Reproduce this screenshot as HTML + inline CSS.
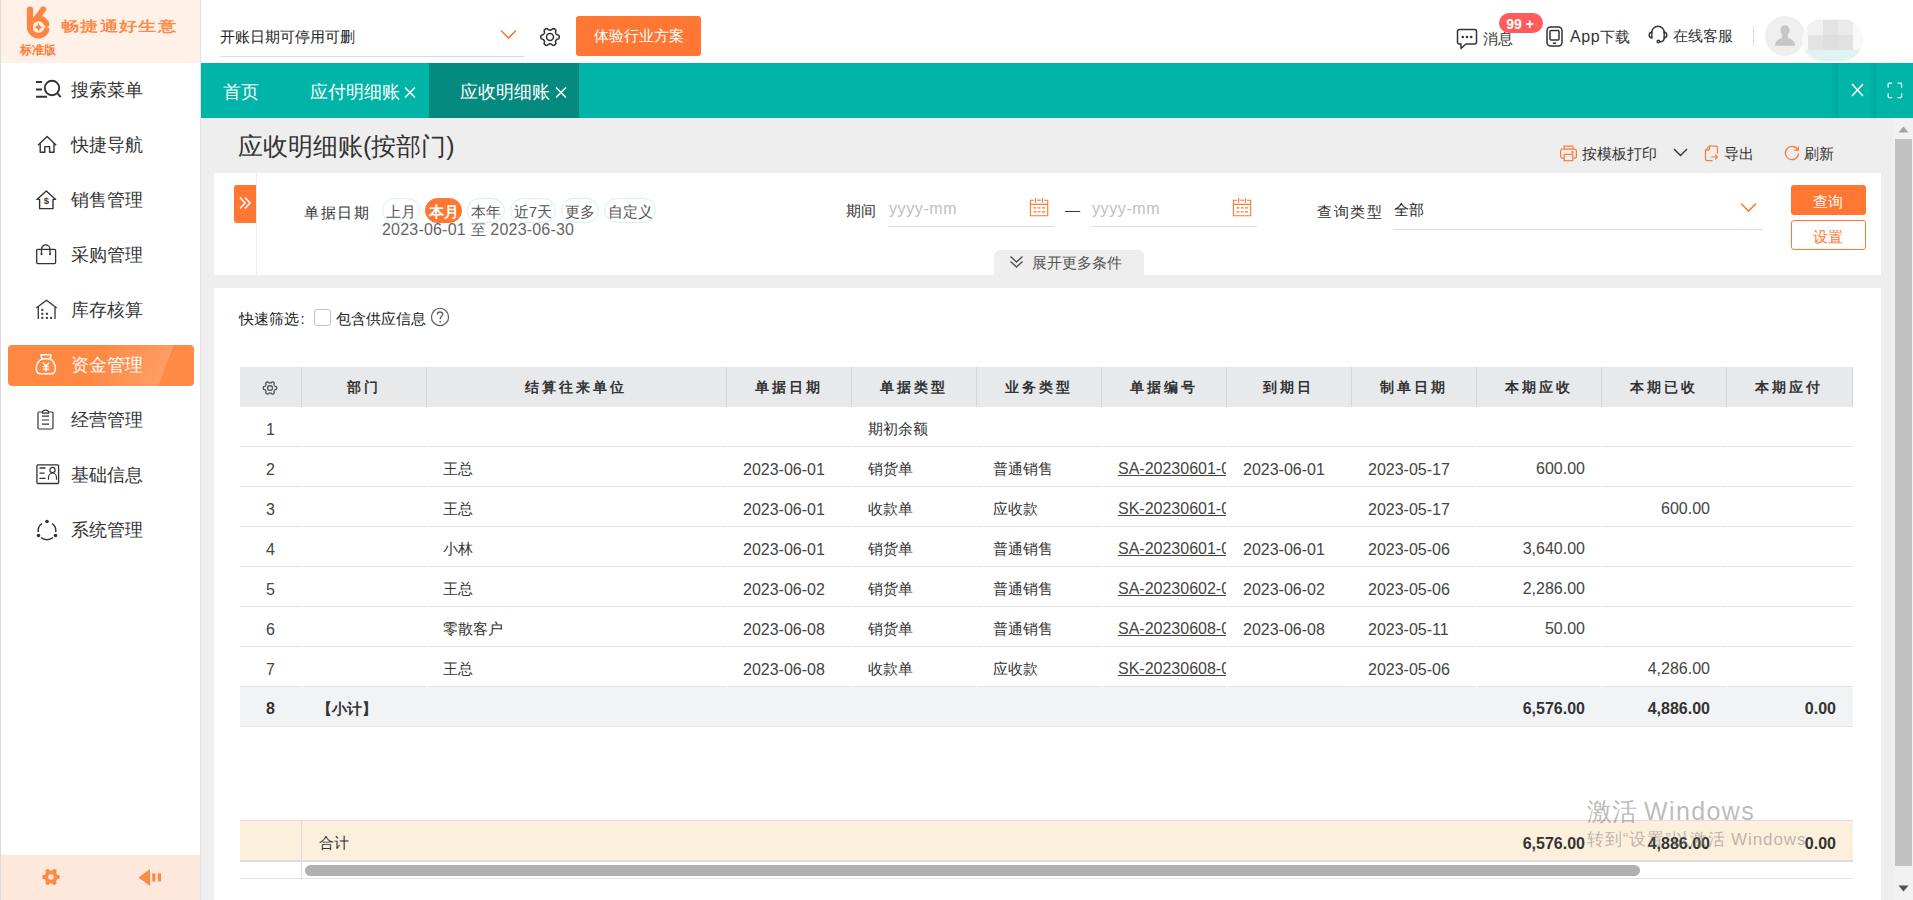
<!DOCTYPE html>
<html><head><meta charset="utf-8">
<style>
*{box-sizing:border-box;margin:0;padding:0}
html,body{width:1913px;height:900px;overflow:hidden;background:#fff;font-family:"Liberation Sans",sans-serif;color:#333}
.a{position:absolute;white-space:nowrap}
svg{position:absolute;overflow:visible}
/* sidebar */
#side{position:absolute;left:0;top:0;width:201px;height:900px;background:#fff;border-left:1px solid #dcdcdc;border-right:1px solid #e2e2e2}
#logo{position:absolute;left:0;top:0;width:199px;height:63px;background:#fff0e8}
.mi{position:absolute;left:71px;font-size:18px;line-height:18px;color:#333}
#act{position:absolute;left:7px;top:345px;width:186px;height:41px;border-radius:4px;background:linear-gradient(111deg,#ff8843 0%,#ff8843 45%,#ff9d63 82%,#ff8a46 82.4%,#ff8a46 100%)}
#sbot{position:absolute;left:0;top:855px;width:199px;height:45px;background:#fee8dc}
/* header */
#hdr{position:absolute;left:201px;top:0;width:1712px;height:63px;background:#fff}
#tabs{position:absolute;left:201px;top:63px;width:1712px;height:55px;background:#00b4a8}
.tab{position:absolute;top:20px;font-size:18px;line-height:18px;color:#fff}
#content{position:absolute;left:201px;top:118px;width:1712px;height:782px;background:#eeeeee}
.card{position:absolute;background:#fff}
.pill{position:absolute;top:198px;height:25px;border:1px solid #d8efed;border-radius:13px;font-size:15px;line-height:25px;color:#555;text-align:center}
/* table */
.th{position:absolute;top:367px;height:40px;font-size:14px;font-weight:bold;line-height:40px;color:#333;text-align:center;letter-spacing:3px}
.vl{position:absolute;width:1px;background:#d4d6d9}
.hl{position:absolute;left:240px;width:1613px;height:1px;background:#e3e3e3}
.c{position:absolute;font-size:15px;line-height:16px;color:#333;white-space:nowrap}
.r{text-align:right}
.lk{text-decoration:underline}
</style></head><body>

<!-- SIDEBAR -->
<div id="side">
  <div id="logo"></div>
  <div id="act"></div>
  <div id="sbot"></div>
</div>
<svg style="left:0px;top:0px" width="50" height="45" viewBox="0 0 50 45" fill="none" stroke="#ff8540" stroke-linecap="round">
  <path d="M30 9.5V27" stroke-width="6.2"/>
  <path d="M43.3 9.3L36.5 18.5" stroke-width="6"/>
  <path d="M46.6 24.2A8.6 8.6 0 1 0 46.6 29.8" stroke-width="5.6"/>
  <path d="M38.6 22.6Q39.1 26.8 43.2 27.3Q39.1 27.8 38.6 32Q38.1 27.8 34 27.3Q38.1 26.8 38.6 22.6Z" fill="#ff8540" stroke="none"/>
</svg>
<div class="a" style="left:61px;top:19px;font-size:14px;line-height:14px;font-weight:bold;color:#ff8a48;letter-spacing:0.9px;transform:scaleX(1.3);transform-origin:0 0">畅捷通好生意</div>
<div class="a" style="left:20px;top:44px;font-size:12px;line-height:12px;font-weight:bold;color:#ff7d3a">标准版</div>

<div class="mi" style="top:81px">搜索菜单</div>
<div class="mi" style="top:136px">快捷导航</div>
<div class="mi" style="top:191px">销售管理</div>
<div class="mi" style="top:246px">采购管理</div>
<div class="mi" style="top:301px">库存核算</div>
<div class="mi" style="top:356px;color:#fff">资金管理</div>
<div class="mi" style="top:411px">经营管理</div>
<div class="mi" style="top:466px">基础信息</div>
<div class="mi" style="top:521px">系统管理</div>

<!-- menu icons -->
<svg style="left:36px;top:79px" width="26" height="21" viewBox="0 0 26 21" fill="none" stroke="#333" stroke-width="1.9">
  <path d="M0 3H6M0 10.5H6M0 17.8H11"/><circle cx="16" cy="9" r="7.2"/><path d="M21.2 14.2L24.8 18.2"/>
</svg>
<svg style="left:37px;top:135px" width="21" height="19" viewBox="0 0 21 19" fill="none" stroke="#333" stroke-width="1.4" stroke-linejoin="round">
  <path d="M1 10.2L10.1 1.6L19.2 10.2"/><path d="M3.2 8.2V17.2H7.8V11.6H12.6V17.2H17V8.2"/>
</svg>
<svg style="left:36px;top:189px" width="22" height="21" viewBox="0 0 22 21" fill="none" stroke="#333" stroke-width="1.4" stroke-linejoin="round">
  <path d="M3.6 10.4H0.9L10.3 1.9L19.7 10.4H17V19.6H3.6Z"/>
  <text x="10.3" y="15.3" font-size="9.5" font-weight="bold" text-anchor="middle" fill="#333" stroke="none" font-family="Liberation Sans">$</text>
</svg>
<svg style="left:36px;top:244px" width="21" height="21" viewBox="0 0 21 21" fill="none" stroke="#333" stroke-width="1.3">
  <rect x="0.7" y="5.4" width="18.9" height="14.2" rx="1"/><path d="M5.5 10.2V5.2A4.25 4.25 0 0 1 14 5.2V10.2"/><circle cx="5.5" cy="10.2" r="1" fill="#333" stroke="none"/><circle cx="14" cy="10.2" r="1" fill="#333" stroke="none"/>
</svg>
<svg style="left:36px;top:299px" width="22" height="22" viewBox="0 0 22 22" fill="none" stroke="#333" stroke-width="1.3">
  <path d="M0.3 9L10.5 1.2L20.7 9M2.3 7.6V20M19 7.6V20"/>
  <g fill="#333" stroke="none"><rect x="5.3" y="9.9" width="2" height="2"/><rect x="5.3" y="13.8" width="2" height="2"/><rect x="9.9" y="13.8" width="2" height="2"/><rect x="5.3" y="17.9" width="2" height="2"/><rect x="9.9" y="17.9" width="2" height="2"/><rect x="14.1" y="17.9" width="2" height="2"/></g>
</svg>
<svg style="left:35px;top:353px" width="22" height="22" viewBox="0 0 22 22" fill="none" stroke="#fff" stroke-width="1.5" stroke-linejoin="round">
  <path d="M6.6 1.8H15.2Q16.4 1.8 16 2.9L14.9 5.8H7.1L6 2.9Q5.6 1.8 6.6 1.8Z"/>
  <path d="M7.1 5.8C3.6 7.6 1.3 11 1.3 15.5C1.3 19 2.6 20.8 5.6 20.8H15.9C18.9 20.8 20.3 19 20.3 15.5C20.3 11 18.2 7.6 14.9 5.8"/>
  <path d="M8 9.6L11 13.2L14 9.6M11 13.2V18.6M7.9 13.6H14.1M7.9 16.2H14.1" stroke-width="1.4"/>
</svg>
<svg style="left:37px;top:409px" width="18" height="22" viewBox="0 0 18 22" fill="none" stroke="#333" stroke-width="1.2" stroke-linejoin="round">
  <path d="M6 3H2.2Q1 3 1 4.2V18.8Q1 20 2.2 20H14.8Q16 20 16 18.8V4.2Q16 3 14.8 3H11"/><path d="M5.5 4.2H11.5V3.2C11.5 1.9 10.3 1.2 8.5 1.2C6.7 1.2 5.5 1.9 5.5 3.2Z"/><path d="M5 7.2H12M5 11H12M5 15.2H12"/>
</svg>
<svg style="left:36px;top:464px" width="24" height="21" viewBox="0 0 24 21" fill="none" stroke="#333" stroke-width="1.3">
  <rect x="0.9" y="0.9" width="21.7" height="18.6" rx="1"/><path d="M3.5 4H9.5M3.5 9.2H8.5M3.5 14.4H9.5"/>
  <circle cx="16.5" cy="6" r="2.6" stroke-width="1.2"/><path d="M12.5 15.8V13.5C12.5 11 14.2 9 16.5 9C18.8 9 20.5 11 20.5 13.5V15.8" stroke-width="1.2"/>
</svg>
<svg style="left:36px;top:519px" width="22" height="22" viewBox="0 0 22 22" fill="none" stroke="#333" stroke-width="1.5">
  <path d="M6 4.5A9 9 0 0 0 2.2 13M19.8 13A9 9 0 0 0 16 4.5M5 18.5A9 9 0 0 0 17 18.5" />
  <circle cx="11" cy="2.5" r="1.8" fill="#333" stroke="none"/><circle cx="2.5" cy="16.5" r="1.8" fill="#333" stroke="none"/><circle cx="19.5" cy="16.5" r="1.8" fill="#333" stroke="none"/>
</svg>
<!-- sidebar bottom icons -->
<svg style="left:40.5px;top:868.3px" width="20" height="18" viewBox="0 0 20 18"><path fill-rule="evenodd" d="M18.80 9.00L18.77 9.46L18.68 9.91L18.52 10.35L18.26 10.76L17.34 10.97L16.43 11.09L16.14 11.36L15.91 11.63L15.72 11.91L15.54 12.20L15.38 12.50L15.24 12.81L15.11 13.14L15.02 13.52L15.37 14.37L15.65 15.27L15.43 15.70L15.13 16.06L14.78 16.37L14.40 16.62L13.99 16.82L13.55 16.97L13.09 17.05L12.61 17.03L11.97 16.34L11.40 15.61L11.03 15.50L10.68 15.44L10.34 15.41L10.00 15.40L9.66 15.41L9.32 15.44L8.97 15.50L8.60 15.61L8.03 16.34L7.39 17.03L6.91 17.05L6.45 16.97L6.01 16.82L5.60 16.62L5.22 16.37L4.87 16.06L4.57 15.70L4.35 15.27L4.63 14.37L4.98 13.52L4.89 13.14L4.76 12.81L4.62 12.50L4.46 12.20L4.28 11.91L4.09 11.63L3.86 11.36L3.57 11.09L2.66 10.97L1.74 10.76L1.48 10.35L1.32 9.91L1.23 9.46L1.20 9.00L1.23 8.54L1.32 8.09L1.48 7.65L1.74 7.24L2.66 7.03L3.57 6.91L3.86 6.64L4.09 6.37L4.28 6.09L4.46 5.80L4.62 5.50L4.76 5.19L4.89 4.86L4.98 4.48L4.63 3.63L4.35 2.73L4.57 2.30L4.87 1.94L5.22 1.63L5.60 1.38L6.01 1.18L6.45 1.03L6.91 0.95L7.39 0.97L8.03 1.66L8.60 2.39L8.97 2.50L9.32 2.56L9.66 2.59L10.00 2.60L10.34 2.59L10.68 2.56L11.03 2.50L11.40 2.39L11.97 1.66L12.61 0.97L13.09 0.95L13.55 1.03L13.99 1.18L14.40 1.38L14.78 1.63L15.13 1.94L15.43 2.30L15.65 2.73L15.37 3.63L15.02 4.48L15.11 4.86L15.24 5.19L15.38 5.50L15.54 5.80L15.72 6.09L15.91 6.37L16.14 6.64L16.43 6.91L17.34 7.03L18.26 7.24L18.52 7.65L18.68 8.09L18.77 8.54Z M12.8 9A2.8 2.8 0 1 0 7.2 9A2.8 2.8 0 1 0 12.8 9Z" fill="#ff8a45"/></svg>
<svg style="left:138px;top:869px" width="24" height="17" viewBox="0 0 24 17" fill="#ff8a45">
  <path d="M12 0V17L0.5 8.5Z"/><rect x="14.2" y="4.3" width="3.2" height="8.2"/><rect x="19.8" y="4.3" width="3.2" height="8.2"/>
</svg>

<!-- HEADER -->
<div id="hdr"></div>
<div class="a" style="left:220px;top:29px;font-size:15px;line-height:15px;color:#222">开账日期可停用可删</div>
<div style="position:absolute;left:220px;top:56px;width:304px;height:1px;background:#dcdcdc"></div>
<svg style="left:500px;top:29px" width="17" height="11" viewBox="0 0 17 11" fill="none" stroke="#ff7a33" stroke-width="1.6"><path d="M1 1.5L8.5 9L16 1.5"/></svg>
<svg style="left:538.5px;top:25.5px" width="22" height="22" viewBox="0 0 24 24" fill="none" stroke="#333" stroke-width="1.7" stroke-linejoin="round"><path d="M22.1 12.0L22.1 12.5L21.9 13.0L21.7 13.5L21.4 14.0L20.5 14.3L19.6 14.5L19.2 14.8L18.9 15.1L18.7 15.4L18.5 15.8L18.3 16.1L18.2 16.5L18.0 16.9L17.9 17.3L18.2 18.2L18.4 19.1L18.2 19.7L17.9 20.1L17.5 20.4L17.1 20.7L16.6 21.0L16.1 21.1L15.5 21.2L15.0 21.1L14.3 20.5L13.7 19.8L13.2 19.7L12.8 19.6L12.4 19.5L12.0 19.5L11.6 19.5L11.2 19.6L10.8 19.7L10.3 19.8L9.7 20.5L9.0 21.1L8.5 21.2L7.9 21.1L7.4 21.0L7.0 20.7L6.5 20.4L6.1 20.1L5.8 19.7L5.6 19.1L5.8 18.2L6.1 17.3L6.0 16.9L5.8 16.5L5.7 16.1L5.5 15.8L5.3 15.4L5.1 15.1L4.8 14.8L4.4 14.5L3.5 14.3L2.6 14.0L2.3 13.5L2.1 13.0L1.9 12.5L1.9 12.0L1.9 11.5L2.1 11.0L2.3 10.5L2.6 10.0L3.5 9.7L4.4 9.5L4.8 9.2L5.1 8.9L5.3 8.6L5.5 8.3L5.7 7.9L5.8 7.5L6.0 7.1L6.1 6.7L5.8 5.8L5.6 4.9L5.8 4.3L6.1 3.9L6.5 3.6L6.9 3.3L7.4 3.0L7.9 2.9L8.5 2.8L9.0 2.9L9.7 3.5L10.3 4.2L10.8 4.3L11.2 4.4L11.6 4.5L12.0 4.5L12.4 4.5L12.8 4.4L13.2 4.3L13.7 4.2L14.3 3.5L15.0 2.9L15.5 2.8L16.1 2.9L16.6 3.0L17.1 3.3L17.5 3.6L17.9 3.9L18.2 4.3L18.4 4.9L18.2 5.8L17.9 6.7L18.0 7.1L18.2 7.5L18.3 7.9L18.5 8.3L18.7 8.6L18.9 8.9L19.2 9.2L19.6 9.5L20.5 9.7L21.4 10.0L21.7 10.5L21.9 11.0L22.1 11.5Z"/><circle cx="12" cy="12" r="3.8"/></svg>
<div style="position:absolute;left:576px;top:16px;width:125px;height:40px;background:#ff7733;border-radius:3px"></div>
<div class="a" style="left:576px;top:28px;width:125px;text-align:center;font-size:15px;line-height:15px;color:#fff">体验行业方案</div>

<svg style="left:1456px;top:28px" width="22" height="22" viewBox="0 0 22 22" fill="none" stroke="#333" stroke-width="1.5" stroke-linejoin="round">
  <path d="M3.5 1.5H18.5Q20.5 1.5 20.5 3.5V14Q20.5 16 18.5 16H10L5 20.5V16H3.5Q1.5 16 1.5 14V3.5Q1.5 1.5 3.5 1.5Z"/>
  <circle cx="6.8" cy="9" r="1.3" fill="#333" stroke="none"/><circle cx="11" cy="9" r="1.3" fill="#333" stroke="none"/><circle cx="15.2" cy="9" r="1.3" fill="#333" stroke="none"/>
</svg>
<div class="a" style="left:1483px;top:31px;font-size:15px;line-height:15px;color:#333">消息</div>
<div style="position:absolute;left:1499px;top:13px;width:44px;height:20px;background:#ff5b5b;border-radius:10px"></div>
<div class="a" style="left:1498px;top:17px;width:44px;text-align:center;font-size:14px;line-height:14px;font-weight:bold;color:#fff">99 +</div>
<svg style="left:1546px;top:26px" width="17" height="21" viewBox="0 0 17 21" fill="none" stroke="#333" stroke-width="1.5">
  <rect x="1" y="1" width="15" height="19" rx="3.5"/><rect x="4" y="4.5" width="9" height="9.5" rx="1"/><path d="M6.8 17.2H10.2"/>
</svg>
<div class="a" style="left:1570px;top:29px;font-size:16px;line-height:16px;color:#333"><span style="letter-spacing:0.6px">App</span><span style="font-size:15px">下载</span></div>
<svg style="left:1648px;top:24px" width="20" height="21" viewBox="0 0 20 21" fill="none" stroke="#333" stroke-width="1.4" stroke-linecap="round">
  <path d="M3.8 8.5A6.2 6.2 0 0 1 16.2 8.5"/><path d="M3.8 8V14"/><path d="M16.2 8V14"/>
  <path d="M3.8 8.2C2 8.2 1.2 9.5 1.2 11C1.2 12.5 2 13.8 3.8 13.8"/><path d="M16.2 8.2C18 8.2 18.8 9.5 18.8 11C18.8 12.5 18 13.8 16.2 13.8"/>
  <path d="M16.2 14C16.2 16.5 14 17.8 11.5 17.8"/><circle cx="10.4" cy="17.6" r="1.3"/>
</svg>
<div class="a" style="left:1673px;top:28px;font-size:15px;line-height:15px;color:#333">在线客服</div>
<div style="position:absolute;left:1753px;top:26px;width:1px;height:20px;background:#d9d9d9"></div>
<div style="position:absolute;left:1765px;top:16px;width:40px;height:40px;border-radius:50%;background:#efefef"></div>
<svg style="left:1775px;top:24px" width="20" height="22" viewBox="0 0 20 22" fill="#c6c6c6">
  <ellipse cx="10" cy="6.2" rx="4.6" ry="5.2"/><path d="M0 21.8C0 17.5 3 15.2 7 13.8H13C17 15.2 20 17.5 20 21.8Z"/><path d="M7.2 10.5H12.8V14.5H7.2Z"/>
</svg>
<div style="position:absolute;left:1802px;top:19px;width:61px;height:42px;border-radius:21px;background:#f7f8f8;overflow:hidden">
  <div style="position:absolute;left:0;top:31px;width:61px;height:11px;background:#dff3f1"></div>
  <div style="position:absolute;left:6px;top:1px;width:15px;height:15px;background:#f1f1f1"></div>
  <div style="position:absolute;left:21px;top:1px;width:15px;height:15px;background:#e3e3e3"></div>
  <div style="position:absolute;left:36px;top:1px;width:15px;height:15px;background:#eaeaea"></div>
  <div style="position:absolute;left:6px;top:16px;width:15px;height:15px;background:#e3e3e3"></div>
  <div style="position:absolute;left:21px;top:16px;width:15px;height:15px;background:#dedede"></div>
  <div style="position:absolute;left:36px;top:16px;width:15px;height:15px;background:#e1e1e1"></div>
</div>
<div style="position:absolute;left:1860px;top:56px;width:53px;height:7px;background:linear-gradient(rgba(0,0,0,0),rgba(0,0,0,0.05));-webkit-mask-image:linear-gradient(90deg,transparent,#000)"></div>
<div id="tabs">
  <div style="position:absolute;left:228px;top:0;width:150px;height:55px;background:#058a80"></div>
  <div style="position:absolute;left:1630px;top:0;width:7px;height:55px;background:linear-gradient(90deg,rgba(0,0,0,0),rgba(0,0,0,0.07))"></div>
  <div style="position:absolute;left:1668px;top:0;width:7px;height:55px;background:linear-gradient(90deg,rgba(0,0,0,0),rgba(0,0,0,0.07))"></div>
</div>
<div class="tab" style="left:223px;top:83px">首页</div>
<div class="tab" style="left:310px;top:83px">应付明细账</div>
<svg style="left:404px;top:87px" width="12" height="11" viewBox="0 0 12 11" stroke="#fff" stroke-width="1.5"><path d="M1 0.5L11 10.5M11 0.5L1 10.5"/></svg>
<div class="tab" style="left:460px;top:83px">应收明细账</div>
<svg style="left:555px;top:87px" width="12" height="11" viewBox="0 0 12 11" stroke="#fff" stroke-width="1.5"><path d="M1 0.5L11 10.5M11 0.5L1 10.5"/></svg>
<svg style="left:1851px;top:83px" width="13" height="14" viewBox="0 0 13 14" stroke="#fff" stroke-width="1.6"><path d="M1 1L12 13M12 1L1 13"/></svg>
<svg style="left:1887px;top:82px" width="16" height="17" viewBox="0 0 16 17" fill="none" stroke="#fff" stroke-width="1.3" stroke-linecap="round" stroke-linejoin="round"><path d="M1.2 5V2.4Q1.2 1.2 2.4 1.2H4.6M11 1.2H13.4Q14.6 1.2 14.6 2.4V5M14.6 12V14.4Q14.6 15.6 13.4 15.6H11M4.6 15.6H2.4Q1.2 15.6 1.2 14.4V12"/></svg>

<!-- CONTENT -->
<div id="content"></div>
<div class="a" style="left:238px;top:134px;font-size:25px;line-height:25px;color:#333">应收明细账(按部门)</div>
<!-- toolbar -->
<svg style="left:1559px;top:145px" width="19" height="17" viewBox="0 0 19 17" fill="none" stroke="#ff7a33" stroke-width="1.2">
  <path d="M5.2 4V1.1H13.8V4"/><path d="M5.2 13.2H3.6Q1.6 13.2 1.6 11.2V6.2Q1.6 4.2 3.6 4.2H15.4Q17.4 4.2 17.4 6.2V11.2Q17.4 13.2 15.4 13.2H13.8"/>
  <rect x="5.2" y="9.3" width="8.6" height="6.4"/><circle cx="13.5" cy="7.1" r="0.6" fill="#ff7a33"/>
</svg>
<div class="a" style="left:1582px;top:146px;font-size:15px;line-height:15px;color:#333">按模板打印</div>
<svg style="left:1673px;top:148px" width="15" height="9" viewBox="0 0 15 9" fill="none" stroke="#333" stroke-width="1.4"><path d="M1 1L7.5 7.5L14 1"/></svg>
<svg style="left:1704px;top:145px" width="16" height="17" viewBox="0 0 16 17" fill="none" stroke="#ff7a33" stroke-width="1.2" stroke-linejoin="round">
  <path d="M13.5 8.5V3Q13.5 1.1 11.6 1.1H5.5L1.5 5.1V13.7Q1.5 15.6 3.4 15.6H8.5"/><path d="M5.5 1.1V3.7Q5.5 5.1 4.1 5.1H1.5"/>
  <path d="M7.2 12H13.3M11 9.6L13.4 12L11 14.4"/>
</svg>
<div class="a" style="left:1724px;top:146px;font-size:15px;line-height:15px;color:#333">导出</div>
<svg style="left:1784px;top:145px" width="17" height="17" viewBox="0 0 17 17" fill="none" stroke="#ff7a33" stroke-width="1.3" stroke-linecap="round">
  <path d="M13.8 5A6.6 6.6 0 1 0 14.5 8.8"/><path d="M14.3 1.8L14.2 5.4L10.8 5.2" stroke-linejoin="round"/>
</svg>
<div class="a" style="left:1804px;top:146px;font-size:15px;line-height:15px;color:#333">刷新</div>

<div class="card" style="left:214px;top:173px;width:1667px;height:102px"></div>
<div style="position:absolute;left:256px;top:173px;width:1px;height:102px;background:#ececec"></div>
<div style="position:absolute;left:234px;top:185px;width:22px;height:38px;background:#ff7733;border-radius:3px 0 0 3px"></div>
<svg style="left:238px;top:196px" width="14" height="14" viewBox="0 0 14 14" fill="none" stroke="#fff" stroke-width="1.6"><path d="M2 1.5L7 7L2 12.5M7 1.5L12 7L7 12.5"/></svg>
<div class="a" style="left:304px;top:205px;font-size:15px;line-height:15px;color:#333;letter-spacing:1.5px">单据日期</div>
<div class="pill" style="left:382px;width:38px">上月</div>
<div class="pill" style="left:425px;width:37px;background:#ff7733;border-color:#ff7733;color:#fff;font-weight:bold">本月</div>
<div class="pill" style="left:467px;width:38px">本年</div>
<div class="pill" style="left:510px;width:46px">近7天</div>
<div class="pill" style="left:561px;width:38px">更多</div>
<div class="pill" style="left:604px;width:52px">自定义</div>
<div class="a" style="left:382px;top:222px;font-size:16px;line-height:16px;color:#666;letter-spacing:0.2px">2023-06-01 <span style="font-size:15px">至</span> 2023-06-30</div>

<div class="a" style="left:846px;top:203px;font-size:15px;line-height:15px;color:#333">期间</div>
<div class="a" style="left:889px;top:201px;font-size:16px;line-height:16px;letter-spacing:0.6px;color:#c0c0c0">yyyy-mm</div>
<div style="position:absolute;left:888px;top:226px;width:166px;height:1px;background:#dcdcdc"></div>
<div class="a" style="left:1065px;top:202px;font-size:15px;line-height:15px;color:#333">—</div>
<div class="a" style="left:1092px;top:201px;font-size:16px;line-height:16px;letter-spacing:0.6px;color:#c0c0c0">yyyy-mm</div>
<div style="position:absolute;left:1092px;top:226px;width:165px;height:1px;background:#dcdcdc"></div>
<svg style="left:1029px;top:197px" width="20" height="20" viewBox="0 0 20 20" fill="none" stroke="#ff7a33" stroke-width="1.15">
  <path d="M5.2 3.2H1.4V18.7H18.7V3.2H15"/><path d="M8.2 3.2H11.9"/><path d="M1.4 7.3H18.7M6.7 1.1V5.8M13.4 1.1V5.8"/><path d="M4.5 10.9H7.5M8.8 10.9H11.6M13 10.9H16M4.5 14.8H7.5M8.8 14.8H11.6M13 14.8H16" stroke-width="1.3"/>
</svg>
<svg style="left:1232px;top:197px" width="20" height="20" viewBox="0 0 20 20" fill="none" stroke="#ff7a33" stroke-width="1.15">
  <path d="M5.2 3.2H1.4V18.7H18.7V3.2H15"/><path d="M8.2 3.2H11.9"/><path d="M1.4 7.3H18.7M6.7 1.1V5.8M13.4 1.1V5.8"/><path d="M4.5 10.9H7.5M8.8 10.9H11.6M13 10.9H16M4.5 14.8H7.5M8.8 14.8H11.6M13 14.8H16" stroke-width="1.3"/>
</svg>
<div style="position:absolute;left:994px;top:250px;width:150px;height:25px;background:#eeeeee;border-radius:6px 6px 0 0"></div>
<svg style="left:1009px;top:255px" width="15" height="14" viewBox="0 0 15 14" fill="none" stroke="#555" stroke-width="1.5"><path d="M1.5 1.5L7.5 7L13.5 1.5M1.5 6.5L7.5 12L13.5 6.5"/></svg>
<div class="a" style="left:1032px;top:255px;font-size:15px;line-height:15px;color:#555">展开更多条件</div>

<div class="a" style="left:1317px;top:204px;font-size:15px;line-height:15px;color:#333;letter-spacing:1.5px">查询类型</div>
<div class="a" style="left:1394px;top:202px;font-size:15px;line-height:15px;color:#222">全部</div>
<svg style="left:1740px;top:202px" width="17" height="11" viewBox="0 0 17 11" fill="none" stroke="#ff7a33" stroke-width="1.6"><path d="M1 1.5L8.5 9L16 1.5"/></svg>
<div style="position:absolute;left:1394px;top:229px;width:369px;height:1px;background:#dcdcdc"></div>
<div style="position:absolute;left:1791px;top:185px;width:75px;height:30px;background:#ff7733;border-radius:3px"></div>
<div class="a" style="left:1790px;top:194px;width:75px;text-align:center;font-size:15px;line-height:15px;color:#fff">查询</div>
<div style="position:absolute;left:1791px;top:220px;width:75px;height:30px;border:1px solid #ff7733;border-radius:3px;background:#fff"></div>
<div class="a" style="left:1790px;top:229px;width:75px;text-align:center;font-size:15px;line-height:15px;color:#ff7733">设置</div>

<div class="card" style="left:214px;top:288px;width:1667px;height:612px"></div>
<!-- TABLE -->
<div class="a" style="left:239px;top:311px;font-size:15px;line-height:15px;color:#222">快速筛选<span style="margin-left:1.5px">:</span></div>
<div style="position:absolute;left:314px;top:309px;width:17px;height:17px;border:1px solid #c4c4c4;border-radius:3px;background:#fff"></div>
<div class="a" style="left:336px;top:311px;font-size:15px;line-height:15px;color:#222">包含供应信息</div>
<svg style="left:430px;top:307px" width="20" height="20" viewBox="0 0 20 20" fill="none" stroke="#666" stroke-width="1.3"><circle cx="10" cy="10" r="8.6"/><path d="M7.3 7.6C7.3 5.9 8.5 5 10 5C11.6 5 12.7 6 12.7 7.3C12.7 9.2 10.2 9.4 10.2 11.7V12.3" stroke-width="1.4"/><circle cx="10.2" cy="14.8" r="0.9" fill="#666" stroke="none"/></svg>
<div style="position:absolute;left:240px;top:367px;width:1613px;height:40px;background:#e8e9eb"></div>
<div class="vl" style="left:301px;top:367px;height:40px"></div>
<div class="vl" style="left:426px;top:367px;height:40px"></div>
<div class="vl" style="left:726px;top:367px;height:40px"></div>
<div class="vl" style="left:851px;top:367px;height:40px"></div>
<div class="vl" style="left:976px;top:367px;height:40px"></div>
<div class="vl" style="left:1101px;top:367px;height:40px"></div>
<div class="vl" style="left:1226px;top:367px;height:40px"></div>
<div class="vl" style="left:1351px;top:367px;height:40px"></div>
<div class="vl" style="left:1476px;top:367px;height:40px"></div>
<div class="vl" style="left:1601px;top:367px;height:40px"></div>
<div class="vl" style="left:1726px;top:367px;height:40px"></div>
<div class="vl" style="left:1852px;top:367px;height:40px"></div>
<div class="th" style="left:301px;width:125px">部门</div>
<div class="th" style="left:426px;width:300px">结算往来单位</div>
<div class="th" style="left:726px;width:125px">单据日期</div>
<div class="th" style="left:851px;width:125px">单据类型</div>
<div class="th" style="left:976px;width:125px">业务类型</div>
<div class="th" style="left:1101px;width:125px">单据编号</div>
<div class="th" style="left:1226px;width:125px">到期日</div>
<div class="th" style="left:1351px;width:125px">制单日期</div>
<div class="th" style="left:1476px;width:125px">本期应收</div>
<div class="th" style="left:1601px;width:125px">本期已收</div>
<div class="th" style="left:1726px;width:126px">本期应付</div>
<svg style="left:262px;top:380px" width="16" height="16" viewBox="0 0 24 24" fill="none" stroke="#444" stroke-width="1.8" stroke-linejoin="round"><path d="M22.1 12.0L22.1 12.5L21.9 13.0L21.7 13.5L21.4 14.0L20.5 14.3L19.6 14.5L19.2 14.8L18.9 15.1L18.7 15.4L18.5 15.8L18.3 16.1L18.2 16.5L18.0 16.9L17.9 17.3L18.2 18.2L18.4 19.1L18.2 19.7L17.9 20.1L17.5 20.4L17.1 20.7L16.6 21.0L16.1 21.1L15.5 21.2L15.0 21.1L14.3 20.5L13.7 19.8L13.2 19.7L12.8 19.6L12.4 19.5L12.0 19.5L11.6 19.5L11.2 19.6L10.8 19.7L10.3 19.8L9.7 20.5L9.0 21.1L8.5 21.2L7.9 21.1L7.4 21.0L7.0 20.7L6.5 20.4L6.1 20.1L5.8 19.7L5.6 19.1L5.8 18.2L6.1 17.3L6.0 16.9L5.8 16.5L5.7 16.1L5.5 15.8L5.3 15.4L5.1 15.1L4.8 14.8L4.4 14.5L3.5 14.3L2.6 14.0L2.3 13.5L2.1 13.0L1.9 12.5L1.9 12.0L1.9 11.5L2.1 11.0L2.3 10.5L2.6 10.0L3.5 9.7L4.4 9.5L4.8 9.2L5.1 8.9L5.3 8.6L5.5 8.3L5.7 7.9L5.8 7.5L6.0 7.1L6.1 6.7L5.8 5.8L5.6 4.9L5.8 4.3L6.1 3.9L6.5 3.6L6.9 3.3L7.4 3.0L7.9 2.9L8.5 2.8L9.0 2.9L9.7 3.5L10.3 4.2L10.8 4.3L11.2 4.4L11.6 4.5L12.0 4.5L12.4 4.5L12.8 4.4L13.2 4.3L13.7 4.2L14.3 3.5L15.0 2.9L15.5 2.8L16.1 2.9L16.6 3.0L17.1 3.3L17.5 3.6L17.9 3.9L18.2 4.3L18.4 4.9L18.2 5.8L17.9 6.7L18.0 7.1L18.2 7.5L18.3 7.9L18.5 8.3L18.7 8.6L18.9 8.9L19.2 9.2L19.6 9.5L20.5 9.7L21.4 10.0L21.7 10.5L21.9 11.0L22.1 11.5Z"/><circle cx="12" cy="12" r="3.7"/></svg>
<div style="position:absolute;left:240px;top:687px;width:1613px;height:40px;background:#f2f3f5"></div>
<div class="hl" style="top:446px"></div>
<div class="hl" style="top:486px"></div>
<div class="hl" style="top:526px"></div>
<div class="hl" style="top:566px"></div>
<div class="hl" style="top:606px"></div>
<div class="hl" style="top:646px"></div>
<div class="hl" style="top:686px"></div>
<div class="hl" style="top:726px"></div>
<div class="c" style="left:240px;width:61px;text-align:center;top:422px;font-size:16px;color:#444">1</div>
<div class="c" style="left:868px;top:421px;font-size:15px;line-height:15px">期初余额</div>
<div class="c" style="left:240px;width:61px;text-align:center;top:462px;font-size:16px;color:#444">2</div>
<div class="c" style="left:443px;top:461px;font-size:15px;line-height:15px">王总</div>
<div class="c" style="left:743px;top:462px;font-size:16px;color:#444">2023-06-01</div>
<div class="c" style="left:868px;top:461px;font-size:15px;line-height:15px">销货单</div>
<div class="c" style="left:993px;top:461px;font-size:15px;line-height:15px">普通销售</div>
<div class="c lk" style="left:1118px;width:108px;overflow:hidden;top:460px;font-size:16px;color:#444;line-height:17px">SA-20230601-0</div>
<div class="c" style="left:1243px;top:462px;font-size:16px;color:#444">2023-06-01</div>
<div class="c" style="left:1368px;top:462px;font-size:16px;color:#444">2023-05-17</div>
<div class="c r" style="left:1476px;width:109px;top:461px;font-size:16px;color:#444">600.00</div>
<div class="c" style="left:240px;width:61px;text-align:center;top:502px;font-size:16px;color:#444">3</div>
<div class="c" style="left:443px;top:501px;font-size:15px;line-height:15px">王总</div>
<div class="c" style="left:743px;top:502px;font-size:16px;color:#444">2023-06-01</div>
<div class="c" style="left:868px;top:501px;font-size:15px;line-height:15px">收款单</div>
<div class="c" style="left:993px;top:501px;font-size:15px;line-height:15px">应收款</div>
<div class="c lk" style="left:1118px;width:108px;overflow:hidden;top:500px;font-size:16px;color:#444;line-height:17px">SK-20230601-0</div>
<div class="c" style="left:1368px;top:502px;font-size:16px;color:#444">2023-05-17</div>
<div class="c r" style="left:1601px;width:109px;top:501px;font-size:16px;color:#444">600.00</div>
<div class="c" style="left:240px;width:61px;text-align:center;top:542px;font-size:16px;color:#444">4</div>
<div class="c" style="left:443px;top:541px;font-size:15px;line-height:15px">小林</div>
<div class="c" style="left:743px;top:542px;font-size:16px;color:#444">2023-06-01</div>
<div class="c" style="left:868px;top:541px;font-size:15px;line-height:15px">销货单</div>
<div class="c" style="left:993px;top:541px;font-size:15px;line-height:15px">普通销售</div>
<div class="c lk" style="left:1118px;width:108px;overflow:hidden;top:540px;font-size:16px;color:#444;line-height:17px">SA-20230601-0</div>
<div class="c" style="left:1243px;top:542px;font-size:16px;color:#444">2023-06-01</div>
<div class="c" style="left:1368px;top:542px;font-size:16px;color:#444">2023-05-06</div>
<div class="c r" style="left:1476px;width:109px;top:541px;font-size:16px;color:#444">3,640.00</div>
<div class="c" style="left:240px;width:61px;text-align:center;top:582px;font-size:16px;color:#444">5</div>
<div class="c" style="left:443px;top:581px;font-size:15px;line-height:15px">王总</div>
<div class="c" style="left:743px;top:582px;font-size:16px;color:#444">2023-06-02</div>
<div class="c" style="left:868px;top:581px;font-size:15px;line-height:15px">销货单</div>
<div class="c" style="left:993px;top:581px;font-size:15px;line-height:15px">普通销售</div>
<div class="c lk" style="left:1118px;width:108px;overflow:hidden;top:580px;font-size:16px;color:#444;line-height:17px">SA-20230602-0</div>
<div class="c" style="left:1243px;top:582px;font-size:16px;color:#444">2023-06-02</div>
<div class="c" style="left:1368px;top:582px;font-size:16px;color:#444">2023-05-06</div>
<div class="c r" style="left:1476px;width:109px;top:581px;font-size:16px;color:#444">2,286.00</div>
<div class="c" style="left:240px;width:61px;text-align:center;top:622px;font-size:16px;color:#444">6</div>
<div class="c" style="left:443px;top:621px;font-size:15px;line-height:15px">零散客户</div>
<div class="c" style="left:743px;top:622px;font-size:16px;color:#444">2023-06-08</div>
<div class="c" style="left:868px;top:621px;font-size:15px;line-height:15px">销货单</div>
<div class="c" style="left:993px;top:621px;font-size:15px;line-height:15px">普通销售</div>
<div class="c lk" style="left:1118px;width:108px;overflow:hidden;top:620px;font-size:16px;color:#444;line-height:17px">SA-20230608-0</div>
<div class="c" style="left:1243px;top:622px;font-size:16px;color:#444">2023-06-08</div>
<div class="c" style="left:1368px;top:622px;font-size:16px;color:#444">2023-05-11</div>
<div class="c r" style="left:1476px;width:109px;top:621px;font-size:16px;color:#444">50.00</div>
<div class="c" style="left:240px;width:61px;text-align:center;top:662px;font-size:16px;color:#444">7</div>
<div class="c" style="left:443px;top:661px;font-size:15px;line-height:15px">王总</div>
<div class="c" style="left:743px;top:662px;font-size:16px;color:#444">2023-06-08</div>
<div class="c" style="left:868px;top:661px;font-size:15px;line-height:15px">收款单</div>
<div class="c" style="left:993px;top:661px;font-size:15px;line-height:15px">应收款</div>
<div class="c lk" style="left:1118px;width:108px;overflow:hidden;top:660px;font-size:16px;color:#444;line-height:17px">SK-20230608-0</div>
<div class="c" style="left:1368px;top:662px;font-size:16px;color:#444">2023-05-06</div>
<div class="c r" style="left:1601px;width:109px;top:661px;font-size:16px;color:#444">4,286.00</div>
<div class="c" style="left:240px;width:61px;text-align:center;top:701px;font-weight:bold;font-size:16px">8</div>

<div class="c r" style="left:1476px;width:109px;top:701px;font-weight:bold;font-size:16px">6,576.00</div>
<div class="c r" style="left:1601px;width:109px;top:701px;font-weight:bold;font-size:16px">4,886.00</div>
<div class="c r" style="left:1726px;width:110px;top:701px;font-weight:bold;font-size:16px">0.00</div>
<div class="c" style="left:317px;top:701px;font-weight:bold;font-size:15px;line-height:15px">【小计】</div>
<div style="position:absolute;left:301px;top:446px;width:2px;height:1px;background:#f3f3f3"></div>
<div style="position:absolute;left:426px;top:446px;width:2px;height:1px;background:#f3f3f3"></div>
<div style="position:absolute;left:726px;top:446px;width:2px;height:1px;background:#f3f3f3"></div>
<div style="position:absolute;left:851px;top:446px;width:2px;height:1px;background:#f3f3f3"></div>
<div style="position:absolute;left:976px;top:446px;width:2px;height:1px;background:#f3f3f3"></div>
<div style="position:absolute;left:1101px;top:446px;width:2px;height:1px;background:#f3f3f3"></div>
<div style="position:absolute;left:1226px;top:446px;width:2px;height:1px;background:#f3f3f3"></div>
<div style="position:absolute;left:1351px;top:446px;width:2px;height:1px;background:#f3f3f3"></div>
<div style="position:absolute;left:1476px;top:446px;width:2px;height:1px;background:#f3f3f3"></div>
<div style="position:absolute;left:1601px;top:446px;width:2px;height:1px;background:#f3f3f3"></div>
<div style="position:absolute;left:1726px;top:446px;width:2px;height:1px;background:#f3f3f3"></div>
<div style="position:absolute;left:1852px;top:446px;width:2px;height:1px;background:#f3f3f3"></div>
<div style="position:absolute;left:301px;top:486px;width:2px;height:1px;background:#f3f3f3"></div>
<div style="position:absolute;left:426px;top:486px;width:2px;height:1px;background:#f3f3f3"></div>
<div style="position:absolute;left:726px;top:486px;width:2px;height:1px;background:#f3f3f3"></div>
<div style="position:absolute;left:851px;top:486px;width:2px;height:1px;background:#f3f3f3"></div>
<div style="position:absolute;left:976px;top:486px;width:2px;height:1px;background:#f3f3f3"></div>
<div style="position:absolute;left:1101px;top:486px;width:2px;height:1px;background:#f3f3f3"></div>
<div style="position:absolute;left:1226px;top:486px;width:2px;height:1px;background:#f3f3f3"></div>
<div style="position:absolute;left:1351px;top:486px;width:2px;height:1px;background:#f3f3f3"></div>
<div style="position:absolute;left:1476px;top:486px;width:2px;height:1px;background:#f3f3f3"></div>
<div style="position:absolute;left:1601px;top:486px;width:2px;height:1px;background:#f3f3f3"></div>
<div style="position:absolute;left:1726px;top:486px;width:2px;height:1px;background:#f3f3f3"></div>
<div style="position:absolute;left:1852px;top:486px;width:2px;height:1px;background:#f3f3f3"></div>
<div style="position:absolute;left:301px;top:526px;width:2px;height:1px;background:#f3f3f3"></div>
<div style="position:absolute;left:426px;top:526px;width:2px;height:1px;background:#f3f3f3"></div>
<div style="position:absolute;left:726px;top:526px;width:2px;height:1px;background:#f3f3f3"></div>
<div style="position:absolute;left:851px;top:526px;width:2px;height:1px;background:#f3f3f3"></div>
<div style="position:absolute;left:976px;top:526px;width:2px;height:1px;background:#f3f3f3"></div>
<div style="position:absolute;left:1101px;top:526px;width:2px;height:1px;background:#f3f3f3"></div>
<div style="position:absolute;left:1226px;top:526px;width:2px;height:1px;background:#f3f3f3"></div>
<div style="position:absolute;left:1351px;top:526px;width:2px;height:1px;background:#f3f3f3"></div>
<div style="position:absolute;left:1476px;top:526px;width:2px;height:1px;background:#f3f3f3"></div>
<div style="position:absolute;left:1601px;top:526px;width:2px;height:1px;background:#f3f3f3"></div>
<div style="position:absolute;left:1726px;top:526px;width:2px;height:1px;background:#f3f3f3"></div>
<div style="position:absolute;left:1852px;top:526px;width:2px;height:1px;background:#f3f3f3"></div>
<div style="position:absolute;left:301px;top:566px;width:2px;height:1px;background:#f3f3f3"></div>
<div style="position:absolute;left:426px;top:566px;width:2px;height:1px;background:#f3f3f3"></div>
<div style="position:absolute;left:726px;top:566px;width:2px;height:1px;background:#f3f3f3"></div>
<div style="position:absolute;left:851px;top:566px;width:2px;height:1px;background:#f3f3f3"></div>
<div style="position:absolute;left:976px;top:566px;width:2px;height:1px;background:#f3f3f3"></div>
<div style="position:absolute;left:1101px;top:566px;width:2px;height:1px;background:#f3f3f3"></div>
<div style="position:absolute;left:1226px;top:566px;width:2px;height:1px;background:#f3f3f3"></div>
<div style="position:absolute;left:1351px;top:566px;width:2px;height:1px;background:#f3f3f3"></div>
<div style="position:absolute;left:1476px;top:566px;width:2px;height:1px;background:#f3f3f3"></div>
<div style="position:absolute;left:1601px;top:566px;width:2px;height:1px;background:#f3f3f3"></div>
<div style="position:absolute;left:1726px;top:566px;width:2px;height:1px;background:#f3f3f3"></div>
<div style="position:absolute;left:1852px;top:566px;width:2px;height:1px;background:#f3f3f3"></div>
<div style="position:absolute;left:301px;top:606px;width:2px;height:1px;background:#f3f3f3"></div>
<div style="position:absolute;left:426px;top:606px;width:2px;height:1px;background:#f3f3f3"></div>
<div style="position:absolute;left:726px;top:606px;width:2px;height:1px;background:#f3f3f3"></div>
<div style="position:absolute;left:851px;top:606px;width:2px;height:1px;background:#f3f3f3"></div>
<div style="position:absolute;left:976px;top:606px;width:2px;height:1px;background:#f3f3f3"></div>
<div style="position:absolute;left:1101px;top:606px;width:2px;height:1px;background:#f3f3f3"></div>
<div style="position:absolute;left:1226px;top:606px;width:2px;height:1px;background:#f3f3f3"></div>
<div style="position:absolute;left:1351px;top:606px;width:2px;height:1px;background:#f3f3f3"></div>
<div style="position:absolute;left:1476px;top:606px;width:2px;height:1px;background:#f3f3f3"></div>
<div style="position:absolute;left:1601px;top:606px;width:2px;height:1px;background:#f3f3f3"></div>
<div style="position:absolute;left:1726px;top:606px;width:2px;height:1px;background:#f3f3f3"></div>
<div style="position:absolute;left:1852px;top:606px;width:2px;height:1px;background:#f3f3f3"></div>
<div style="position:absolute;left:301px;top:646px;width:2px;height:1px;background:#f3f3f3"></div>
<div style="position:absolute;left:426px;top:646px;width:2px;height:1px;background:#f3f3f3"></div>
<div style="position:absolute;left:726px;top:646px;width:2px;height:1px;background:#f3f3f3"></div>
<div style="position:absolute;left:851px;top:646px;width:2px;height:1px;background:#f3f3f3"></div>
<div style="position:absolute;left:976px;top:646px;width:2px;height:1px;background:#f3f3f3"></div>
<div style="position:absolute;left:1101px;top:646px;width:2px;height:1px;background:#f3f3f3"></div>
<div style="position:absolute;left:1226px;top:646px;width:2px;height:1px;background:#f3f3f3"></div>
<div style="position:absolute;left:1351px;top:646px;width:2px;height:1px;background:#f3f3f3"></div>
<div style="position:absolute;left:1476px;top:646px;width:2px;height:1px;background:#f3f3f3"></div>
<div style="position:absolute;left:1601px;top:646px;width:2px;height:1px;background:#f3f3f3"></div>
<div style="position:absolute;left:1726px;top:646px;width:2px;height:1px;background:#f3f3f3"></div>
<div style="position:absolute;left:1852px;top:646px;width:2px;height:1px;background:#f3f3f3"></div>
<div style="position:absolute;left:301px;top:686px;width:2px;height:1px;background:#f3f3f3"></div>
<div style="position:absolute;left:426px;top:686px;width:2px;height:1px;background:#f3f3f3"></div>
<div style="position:absolute;left:726px;top:686px;width:2px;height:1px;background:#f3f3f3"></div>
<div style="position:absolute;left:851px;top:686px;width:2px;height:1px;background:#f3f3f3"></div>
<div style="position:absolute;left:976px;top:686px;width:2px;height:1px;background:#f3f3f3"></div>
<div style="position:absolute;left:1101px;top:686px;width:2px;height:1px;background:#f3f3f3"></div>
<div style="position:absolute;left:1226px;top:686px;width:2px;height:1px;background:#f3f3f3"></div>
<div style="position:absolute;left:1351px;top:686px;width:2px;height:1px;background:#f3f3f3"></div>
<div style="position:absolute;left:1476px;top:686px;width:2px;height:1px;background:#f3f3f3"></div>
<div style="position:absolute;left:1601px;top:686px;width:2px;height:1px;background:#f3f3f3"></div>
<div style="position:absolute;left:1726px;top:686px;width:2px;height:1px;background:#f3f3f3"></div>
<div style="position:absolute;left:1852px;top:686px;width:2px;height:1px;background:#f3f3f3"></div>
<div class="hl" style="top:820px;background:#dedede"></div>
<div style="position:absolute;left:240px;top:821px;width:1613px;height:39px;background:#fcf0dc"></div>
<div class="hl" style="top:860px;height:2px;background:#dcdde0"></div>
<div class="vl" style="left:301px;top:821px;height:57px;background:#dedede"></div>
<div class="c" style="left:319px;top:835px;font-size:15px;line-height:15px">合计</div>
<div class="c r" style="left:1476px;width:109px;top:836px;font-weight:bold;font-size:16px">6,576.00</div>
<div class="c r" style="left:1601px;width:109px;top:836px;font-weight:bold;font-size:16px">4,886.00</div>
<div class="c r" style="left:1726px;width:110px;top:836px;font-weight:bold;font-size:16px">0.00</div>
<div style="position:absolute;left:305px;top:865px;width:1335px;height:11px;background:#b0b0b0;border-radius:6px"></div>
<div class="hl" style="top:878px;background:#e3e3e3"></div>
<div class="a" style="left:1587px;top:796px;font-size:25px;line-height:30px;color:rgba(120,120,120,0.5)">激活 <span style="letter-spacing:1.4px">Windows</span></div>
<div class="a" style="left:1587px;top:830px;font-size:17px;line-height:20px;letter-spacing:0.9px;color:rgba(120,120,120,0.5)">转到“设置”以激活 Windows</div>
<!-- scrollbar -->
<div style="position:absolute;left:1893px;top:118px;width:20px;height:782px;background:#f1f1f1"></div>
<div style="position:absolute;left:1895px;top:139px;width:17px;height:727px;background:#c1c1c1"></div>
<svg style="left:1898px;top:126px" width="11" height="7" viewBox="0 0 11 7" fill="#a3a3a3"><path d="M0.5 6.5L5.5 0.5L10.5 6.5Z"/></svg>
<svg style="left:1898px;top:885px" width="11" height="7" viewBox="0 0 11 7" fill="#505050"><path d="M0.5 0.5L5.5 6.5L10.5 0.5Z"/></svg>

</body></html>
